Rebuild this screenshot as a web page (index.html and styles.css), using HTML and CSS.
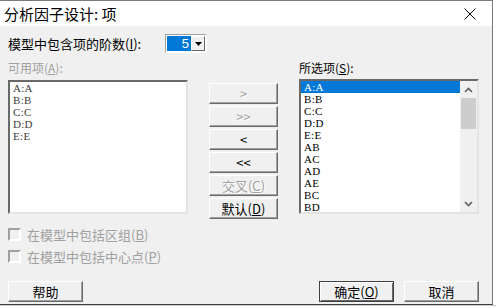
FILE: index.html
```html
<!DOCTYPE html>
<html lang="zh-CN">
<head>
<meta charset="UTF-8">
<title>分析因子设计: 项</title>
<link rel="stylesheet" href="styles.css">
</head>
<body>
<div class="dialog">
  <div class="titlebar">
    <span class="title">分析因子设计: 项</span>
    <svg class="close" width="12" height="12" viewBox="0 0 12 12">
      <path d="M0.5 0.5 L11.5 11.5 M11.5 0.5 L0.5 11.5" stroke="#000" stroke-width="1" fill="none"/>
    </svg>
  </div>
  <div class="content">
    <div class="order-row">
      <span class="order-label">模型中包含项的阶数(<u>I</u>):</span>
      <div class="combo">
        <span class="combo-value">5</span>
        <span class="combo-btn">
          <svg width="7" height="4" viewBox="0 0 7 4"><path d="M0 0 H7 L3.5 4 Z" fill="#000"/></svg>
        </span>
      </div>
    </div>

    <div class="columns">
      <div class="col">
        <div class="label disabled">可用项(<u>A</u>):</div>
        <div class="listbox">
          <div class="item dim">A:A</div>
          <div class="item dim">B:B</div>
          <div class="item dim">C:C</div>
          <div class="item dim">D:D</div>
          <div class="item dim">E:E</div>
        </div>
      </div>

      <div class="movers">
        <button class="btn disabled">&gt;</button>
        <button class="btn disabled">&gt;&gt;</button>
        <button class="btn">&lt;</button>
        <button class="btn">&lt;&lt;</button>
        <button class="btn disabled">交叉(<u>C</u>)</button>
        <button class="btn">默认(<u>D</u>)</button>
      </div>

      <div class="col">
        <div class="label">所选项(<u>S</u>):</div>
        <div class="listbox scrolled">
          <div class="items">
            <div class="item selected">A:A</div>
            <div class="item">B:B</div>
            <div class="item">C:C</div>
            <div class="item">D:D</div>
            <div class="item">E:E</div>
            <div class="item">AB</div>
            <div class="item">AC</div>
            <div class="item">AD</div>
            <div class="item">AE</div>
            <div class="item">BC</div>
            <div class="item">BD</div>
          </div>
          <div class="scrollbar">
            <div class="arrow">
              <svg width="9" height="6" viewBox="0 0 9 6"><path d="M1 5 L4.5 1.5 L8 5" stroke="#606060" stroke-width="1.6" fill="none"/></svg>
            </div>
            <div class="thumb"></div>
            <div class="track"></div>
            <div class="arrow">
              <svg width="9" height="6" viewBox="0 0 9 6"><path d="M1 1 L4.5 4.5 L8 1" stroke="#606060" stroke-width="1.6" fill="none"/></svg>
            </div>
          </div>
        </div>
      </div>
    </div>

    <div class="check disabled"><span class="box"></span><span>在模型中包括区组(<u>B</u>)</span></div>
    <div class="check disabled"><span class="box"></span><span>在模型中包括中心点(<u>P</u>)</span></div>

    <div class="footer">
      <button class="btn wide">帮助</button>
      <button class="btn wide default">确定(<u>O</u>)</button>
      <button class="btn wide">取消</button>
    </div>
  </div>
</div>
<div class="sheet"></div>
</body>
</html>
```

FILE: styles.css
```css
body {
  margin: 0;
  background-color: #fff;
  font-family: "Noto Sans CJK SC", "Liberation Sans", sans-serif;
  font-size: 12px;
  color: #000;
}

.dialog {
  width: 492px;
  height: 303px;
  background-color: #f0f0f0;
  border-top: 1px solid #7a7a7a;
  border-right: 1px solid #7a7a7a;
  border-bottom: 1px solid #404040;
}

.titlebar {
  height: 25px;
  background-color: #fff;
  display: flex;
  align-items: center;
  justify-content: space-between;
  padding: 0 16px 0 4px;
}

.title {
  font-size: 15px;
  line-height: 25px;
}

.content {
  padding: 8px 13px 0 8px;
}

.order-row {
  display: flex;
  align-items: center;
  height: 19px;
}

.order-label {
  width: 157px;
  font-size: 13px;
}

.combo {
  display: flex;
  width: 38px;
  height: 15px;
  padding: 1px;
  border: 1px solid;
  border-color: #a0a0a0 #fff #fff #a0a0a0;
  background-color: #fff;
}

.combo-value {
  flex: 1;
  background-color: #0078d7;
  color: #fff;
  font-family: "Liberation Sans", sans-serif;
  font-size: 13px;
  line-height: 15px;
  text-align: right;
  padding-right: 2px;
}

.combo-btn {
  width: 14px;
  display: flex;
  align-items: center;
  justify-content: center;
  background-color: #f0f0f0;
  border: 1px solid;
  border-color: #fff #696969 #696969 #fff;
  box-sizing: border-box;
}

.columns {
  display: flex;
  gap: 21px;
  margin-top: 7px;
}

.col {
  width: 180px;
}

.label {
  height: 20px;
  line-height: 16px;
  font-size: 12px;
}

.disabled {
  color: #a0a0a0;
}

.listbox {
  height: 130px;
  border: 2px solid;
  border-color: #696969 #e3e3e3 #e3e3e3 #696969;
  background-color: #fff;
  padding: 0;
}

.listbox.scrolled {
  display: flex;
  height: 131px;
  margin-top: -1px;
}

.items {
  flex: 1;
}

.item {
  height: 12px;
  line-height: 12px;
  padding-left: 3px;
  font-family: "Liberation Serif", serif;
  font-size: 11px;
  letter-spacing: 0.3px;
  color: #000;
  overflow: hidden;
}

.item.dim {
  color: #404040;
}

.selected {
  background-color: #0078d7;
  color: #fff;
}

.scrollbar {
  width: 17px;
  display: flex;
  flex-direction: column;
  background-color: #f0f0f0;
}

.arrow {
  height: 17px;
  display: flex;
  align-items: center;
  justify-content: center;
}

.thumb {
  height: 31px;
  margin: 0 1px;
  background-color: #cdcdcd;
}

.track {
  flex: 1;
}

.movers {
  width: 69px;
  padding-top: 23px;
  display: flex;
  flex-direction: column;
  gap: 2px;
}

.btn {
  height: 21px;
  padding: 0;
  background-color: #f0f0f0;
  border: 1px solid;
  border-color: #fff #696969 #696969 #fff;
  box-shadow: inset -1px -1px #a0a0a0;
  font-family: "Noto Sans CJK SC", "Liberation Sans", sans-serif;
  font-size: 13px;
  line-height: 17px;
  color: #000;
}

.btn.disabled {
  color: #a0a0a0;
  text-shadow: 1px 1px #fff;
}

.btn.wide {
  width: 75px;
}

.btn.default {
  border-color: #404040;
  box-shadow: inset 1px 1px #fff, inset -1px -1px #696969;
  margin-left: auto;
}

.check {
  display: flex;
  align-items: center;
  height: 13px;
  margin-top: 9px;
  font-size: 13px;
  gap: 6px;
}

.check:first-of-type {
  margin-top: 7px;
}

.box {
  width: 9px;
  height: 9px;
  border: 2px solid;
  border-color: #a0a0a0 #fff #fff #a0a0a0;
  background-color: #f0f0f0;
}

.footer {
  display: flex;
  gap: 10px;
  margin-top: 18px;
}

.sheet {
  height: 4px;
  border-top: 1px solid #c8c8c8;
  width: 496px;
}
```
